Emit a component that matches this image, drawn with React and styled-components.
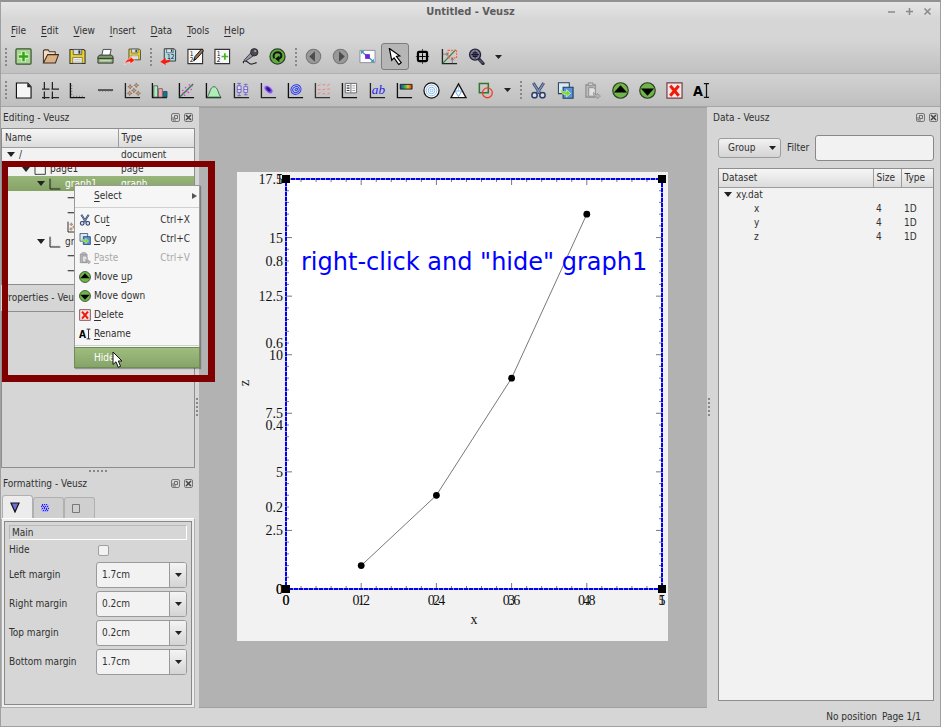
import { useState } from "react";
import styled, { createGlobalStyle, css } from "styled-components";

const GlobalStyle = createGlobalStyle`
  * {
    box-sizing: border-box;
  }
  body {
    margin: 0;
    background: #d6d6d6;
    color: #303030;
    font-family: "DejaVu Sans Condensed", "DejaVu Sans", sans-serif;
    font-size: 10px;
    line-height: 14px;
  }
  button, input {
    font: inherit;
    color: inherit;
    margin: 0;
  }
  button {
    padding: 0;
    border: 0;
    background: none;
  }
  svg {
    display: block;
    flex: none;
  }
`;

/* ---------- icons ---------- */

const Svg = ({ size = 17, children }) => (
  <svg width={size} height={size} viewBox="0 0 18 18" fill="none" aria-hidden="true">
    {children}
  </svg>
);

const Axes = ({ color = "#111" }) => (
  <path d="M1.5 1v15.5H17" stroke={color} strokeWidth="1.4" />
);

const Floppy = ({ fill }) => (
  <>
    <path d="M1 1.5h14.5l1.5 1.5v13.5H1z" fill={fill} stroke="#333" strokeWidth="1.1" />
    <path d="M4.500 1.500h9v5.500h-9z" fill="#d5dde0" stroke="#444" strokeWidth=".8" />
    <path d="M10 2.500h2v3.500h-2z" fill="#333" />
    <path d="M4 10h10v6H4z" fill="#f4f4ea" stroke="#555" strokeWidth=".7" />
    <path d="M5.500 12h7M5.500 14h7" stroke="#aaa" strokeWidth=".7" />
  </>
);

const Spark = ({ x, y }) => (
  <path
    d={`M${x} ${y - 2.5}l.7 1.800 1.800.7-1.800.7-.7 1.800-.7-1.800-1.800-.7 1.800-.7z`}
    fill="#d8a078"
    stroke="#6d4a35"
    strokeWidth=".5"
  />
);

const icons = {
  newDoc: (
    <>
      <rect x="1" y="1" width="16" height="16" rx="1" fill="#a9d494" stroke="#39552d" strokeWidth="1.300" />
      <path d="M9 3.500v11M3.500 9h11" stroke="#dff3d5" strokeWidth="4.600" />
      <path d="M9 4v10M4 9h10" stroke="#35a516" strokeWidth="2.600" />
    </>
  ),
  open: (
    <>
      <path d="M1.500 15.500V3l1-1h4l1.500 2h6v4" fill="#f3dcc2" stroke="#4a3a2b" strokeWidth="1.100" />
      <path d="M1.500 15.800L6 7h11.500l-3.300 8.800z" fill="#dcb184" stroke="#3c2d20" strokeWidth="1.100" />
    </>
  ),
  save: <Floppy fill="#ecd426" />,
  print: (
    <>
      <path d="M5 8l1.500-6.500h8.500L13.500 8z" fill="#fff" stroke="#444" />
      <path d="M1 9l2-1.500h12L17 9v2.500H1z" fill="#7c9d69" stroke="#333" />
      <path d="M1 11h16v5H1z" fill="#8fb27a" stroke="#333" />
      <path d="M3 13.500h12" stroke="#dcebd2" />
    </>
  ),
  exportDoc: (
    <>
      <g transform="translate(4.500 0) scale(.76)">
        <Floppy fill="#ecd426" />
      </g>
      <path d="M.5 18c1-4.500 3-6.500 6-6.500V9l5 4-5 4v-2.500c-3 0-4.500 1-6 3.500z" fill="#ff1a0d" stroke="#fff" strokeWidth=".5" />
    </>
  ),
  importData: (
    <>
      <path d="M4.500.8H15l1.500 1.500v11.500h-12z" fill="#a8dbe6" stroke="#333" />
      <path d="M7 1h7v4H7z" fill="#dbe7ea" stroke="#444" strokeWidth=".7" />
      <path d="M11.500 1.500h1.500v2.500h-1.500z" fill="#333" />
      <text x="7.500" y="11.500" fontSize="7" fill="#111">12</text>
      <path d="M11 11.500c0 3.500-2 4.500-5 4.300v2.200L.3 14.500 6 10.500v2.700c2 .2 3.500-.4 5-1.700z" fill="#ff1a0d" />
    </>
  ),
  editData: (
    <>
      <path d="M1 1.500h15.500v15H1z" fill="#f8f8f8" stroke="#333" strokeWidth="1.200" />
      <text x="3" y="8" fontSize="7" fill="#111">1</text>
      <text x="3" y="15" fontSize="7" fill="#111">2</text>
      <path d="M7 13.500L8.500 9l7-8 2 2-7 8z" fill="#9c7250" stroke="#111" />
      <path d="M7 13.500l.8-2.500 1.500 1.300z" fill="#111" />
    </>
  ),
  createData: (
    <>
      <path d="M1 1.500h15.500v15H1z" fill="#f8f8f8" stroke="#333" strokeWidth="1.200" />
      <text x="3" y="8" fontSize="7" fill="#111">1</text>
      <text x="3" y="15" fontSize="7" fill="#111">2</text>
      <path d="M11.500 5.500v7M8 9h7" stroke="#42b81d" strokeWidth="1.800" />
    </>
  ),
  capture: (
    <>
      <path d="M2 16c-1.500-1 0-3 2.500-2s3 3.500 6 3c2-.3 3-1 5-1.500" stroke="#222" strokeWidth="1.200" />
      <path d="M3.500 14l-1-1.500 7-7.500 3 3z" fill="#9a96ad" stroke="#3b394b" />
      <circle cx="13" cy="4.500" r="3.900" fill="#4c4c52" stroke="#1c1c1c" strokeWidth=".8" />
      <circle cx="14" cy="3.300" r="1.200" fill="#a5a5ad" />
    </>
  ),
  reload: (
    <>
      <circle cx="9" cy="9" r="8" fill="#5fae3e" stroke="#2f3f28" strokeWidth="1.300" />
      <path d="M5.500 11C3.500 7 6 4.500 9 4.500c5 0 5.500 6 1 7" stroke="#111" strokeWidth="2" />
      <path d="M11 8v7l-4.500-3.500z" fill="#111" />
    </>
  ),
  prev: (
    <>
      <circle cx="9" cy="9" r="7.700" fill="#999" stroke="#777" strokeWidth="1.100" />
      <path d="M10.500 3.500v11L4.500 9z" fill="#4c4c4c" />
    </>
  ),
  next: (
    <>
      <circle cx="9" cy="9" r="7.700" fill="#999" stroke="#777" strokeWidth="1.100" />
      <path d="M7.500 3.500v11l6-5.500z" fill="#4c4c4c" />
    </>
  ),
  fullscreen: (
    <>
      <path d="M1 2.500h16v13H1z" fill="#fdfdfd" stroke="#8b8b9e" />
      <path d="M2.500 3.500l13 11" stroke="#3f9ab5" strokeWidth="1.500" />
      <path d="M1.800 3h4L2.500 6.500zM16.200 15h-4l3.300-3.500z" fill="#3f9ab5" />
      <path d="M6.500 6.500h5v5h-5z" fill="#6b25dd" />
    </>
  ),
  select: (
    <path d="M2.500.5l2.500 12.500 2.500-2.500 5 7 2.500-2-5-6.500 3.500-.7z" fill="#fff" stroke="#000" strokeWidth="1.300" />
  ),
  readPoint: (
    <>
      <path d="M9 1v16M2 9h14" stroke="#333" strokeWidth=".9" />
      <rect x="4.200" y="4.200" width="9.600" height="9.600" rx="1" stroke="#000" strokeWidth="2.400" />
      <path d="M9 6v6M6 9h6" stroke="#000" strokeWidth="1" />
    </>
  ),
  zoomGraph: (
    <>
      <Axes color="#222" />
      <path d="M2 16L15.500 2" stroke="#268a42" strokeWidth="1.400" />
      <path d="M7.500 2.500h9v8h-9z" stroke="#ff6347" strokeWidth="1.200" strokeDasharray="2 1" />
      <path d="M2 6.500h5M12 11v5M5.500 5l2 1.500-2 1.500M10.500 12.800l1.500-2 1.500 2" stroke="#666" strokeWidth=".8" />
    </>
  ),
  zoomPage: (
    <>
      <path d="M11 11l5 5.500" stroke="#312f42" strokeWidth="3.400" strokeLinecap="round" />
      <path d="M12 12.500l3.500 3.500" stroke="#77758e" strokeWidth="1" />
      <circle cx="7.500" cy="7" r="5.800" fill="#8381a0" stroke="#25243a" strokeWidth="1.500" />
      <path d="M7.500 3v8M3.500 7h8M5.500 5h4v4h-4z" stroke="#191826" strokeWidth="1.100" />
    </>
  ),
  page: (
    <>
      <path d="M1.500 1h12L17 5v12H1.500z" fill="#f6f6f6" stroke="#111" strokeWidth="1.200" />
      <path d="M13 1l4 4.500h-4z" fill="#222" />
    </>
  ),
  grid: (
    <path d="M2.500 0v8M0 7.500h8M11 0v8M10 7.500h8M2.500 10v8M0 16.500h8M11 10v8M10 16.500h8" stroke="#222" strokeWidth="1.300" />
  ),
  graph: (
    <>
      <Axes />
      <path d="M2 4h1.500M2 7h1.500M2 10h1.500M2 13h1.500M5 16v-1.500M8 16v-1.500M11 16v-1.500M14 16v-1.500" stroke="#555" strokeWidth=".7" />
    </>
  ),
  axis: (
    <>
      <path d="M1 8.500h16" stroke="#111" strokeWidth="1.300" />
      <path d="M3 9v1.500M6 9v1.500M9 9v1.500M12 9v1.500M15 9v1.500" stroke="#777" strokeWidth=".7" />
    </>
  ),
  xy: (
    <>
      <Axes color="#222" />
      <Spark x={6.5} y={5} />
      <Spark x={13} y={3.5} />
      <Spark x={6} y={12} />
      <Spark x={10.5} y={9} />
      <Spark x={15} y={12} />
    </>
  ),
  bar: (
    <>
      <Axes />
      <path d="M3 4h4v12H3z" fill="#a9edb9" stroke="#334" strokeWidth=".7" />
      <path d="M8 7h4v9H8z" fill="#f6a5ad" stroke="#544" strokeWidth=".7" />
      <path d="M13 10h4v6h-4z" fill="#0c7794" stroke="#234" strokeWidth=".7" />
    </>
  ),
  fit: (
    <>
      <Axes />
      <path d="M2 16L16 2" stroke="#24843b" strokeWidth="1.500" />
      <path d="M5 9h.1M8 6h.1M12 3h.1M7 14h.1M11 11h.1M14 8h.1M15 4h.1M9 10h.1M5 12h.1" stroke="#e33ce3" strokeWidth="1.700" strokeLinecap="round" />
    </>
  ),
  func: (
    <>
      <Axes />
      <path d="M2 16C5 14 5 5 9.500 5S14 14 17 16z" fill="#b1edbb" stroke="#3c6b45" />
    </>
  ),
  box: (
    <>
      <Axes color="#222" />
      <path d="M6.500 1v14M13.500 2v12M4.500 1.500h4M4.500 14.500h4M11.500 2.500h4M11.500 13.500h4" stroke="#6c62c7" strokeWidth=".9" />
      <path d="M4.500 4h4v7h-4zM11.500 5h4v6h-4z" fill="#e3e0ff" stroke="#6c62c7" />
      <path d="M4.500 8h4M11.500 8h4" stroke="#6c62c7" />
    </>
  ),
  image: (
    <>
      <Axes color="#222" />
      <ellipse cx="9" cy="8" rx="6.800" ry="4" transform="rotate(42 9 8)" fill="#cdb6f0" />
      <ellipse cx="9" cy="8" rx="5" ry="2.800" transform="rotate(42 9 8)" fill="#8058d5" />
      <ellipse cx="8.800" cy="7.800" rx="3" ry="1.600" transform="rotate(42 9 8)" fill="#32109e" />
    </>
  ),
  contour: (
    <>
      <Axes />
      <g stroke="#2638f5" transform="rotate(-30 9.500 8)">
        <ellipse cx="9.500" cy="8" rx="5.500" ry="5" />
        <ellipse cx="9.500" cy="8" rx="3.500" ry="3" />
        <ellipse cx="9.800" cy="8" rx="1.500" ry="1" />
      </g>
    </>
  ),
  vector: (
    <>
      <Axes color="#333" />
      <path d="M4 4l3-1.500M9 3h3M14 4l3-2M4 8h3M9 8.500l3-1M14 7.500h3M4 13l3-2M9 12.500h3M14 13l3-1.500" stroke="#f08080" />
    </>
  ),
  key: (
    <>
      <Axes />
      <path d="M4.500 1.500h12v10h-12z" fill="#fff" stroke="#666" />
      <path d="M6 4h3M6 6.500h3M6 9h3" stroke="#234" strokeWidth="1.200" />
      <path d="M10.500 2v9" stroke="#666" />
      <path d="M12 4h3M12 6.500h3M12 9h3" stroke="#99a" />
    </>
  ),
  label: (
    <>
      <Axes color="#222" />
      <text x="3" y="13" fontSize="14" fontStyle="italic" fontFamily="Liberation Serif, serif" fill="#2323ee">ab</text>
    </>
  ),
  colorbar: (
    <>
      <defs>
        <linearGradient id="spectrum">
          <stop offset="0" stopColor="#2438c8" />
          <stop offset=".35" stopColor="#21b050" />
          <stop offset=".65" stopColor="#d8c722" />
          <stop offset="1" stopColor="#e02416" />
        </linearGradient>
      </defs>
      <Axes />
      <path d="M4.500 2.500h12.500v5H4.500z" fill="url(#spectrum)" stroke="#222" />
    </>
  ),
  polar: (
    <>
      <circle cx="9" cy="9" r="8" fill="#fff" stroke="#111" strokeWidth="1.300" />
      <circle cx="9" cy="9" r="5.700" stroke="#7eb6ee" />
      <circle cx="9" cy="9" r="3.500" stroke="#7eb6ee" />
      <circle cx="9" cy="9" r="1.400" stroke="#7eb6ee" />
    </>
  ),
  ternary: (
    <>
      <path d="M9 2l8 14.500H1z" fill="#fff" stroke="#111" strokeWidth="1.400" />
      <path d="M5.500 9.500h7L9 15.500z" stroke="#6aa4ef" />
      <path d="M9 4v5" stroke="#9ac3f5" />
    </>
  ),
  shape: (
    <>
      <path d="M2.500 1.500h9.500v10H2.500z" stroke="#31752f" strokeWidth="1.600" />
      <circle cx="11" cy="11.500" r="5.200" stroke="#f23c31" strokeWidth="1.400" />
    </>
  ),
  cut: (
    <>
      <path d="M3.500 1l7 11M14.500 1l-7 11" stroke="#2f4268" strokeWidth="3" />
      <path d="M3.700 1.500l6.500 10M14.300 1.500l-6.500 10" stroke="#7f93bd" strokeWidth="1.400" />
      <circle cx="4.800" cy="14" r="2.800" fill="#dde" stroke="#2c3f6b" strokeWidth="1.600" />
      <circle cx="13.200" cy="14" r="2.800" fill="#dde" stroke="#2c3f6b" strokeWidth="1.600" />
    </>
  ),
  copy: (
    <>
      <path d="M1.500.8H13v11.500H1.500z" fill="#dbe8f6" stroke="#27405f" strokeWidth="1.100" />
      <path d="M6.500 5.500H17v11.700H6.500z" fill="#5b93d8" stroke="#1f3d66" strokeWidth="1.200" />
      <path d="M3.500 6.500c1 3 3 4 6.500 4V8l4.500 4-4.500 4v-2.500c-4 0-6.500-2-6.500-7z" fill="#7cd832" stroke="#e9ffd9" strokeWidth=".6" />
    </>
  ),
  paste: (
    <g stroke="#8d8d8d">
      <path d="M2 3h10v13H2z" fill="#bcbcbc" strokeWidth="1.200" />
      <path d="M4.500 1h5v3h-5z" fill="#ccc" />
      <path d="M5 6h5l2 2v7H5z" fill="#e1e1e1" />
      <path d="M10 11c1 2 2 2.500 4 2.500V12l3.500 3-3.500 3v-2c-3 0-4.500-2-4-5z" fill="#b5b5b5" strokeWidth=".7" />
    </g>
  ),
  up: (
    <>
      <circle cx="9" cy="9" r="8.200" fill="#6fb548" stroke="#2c3d23" strokeWidth="1.200" />
      <path d="M9 3.500l7 7.500H2z" fill="#000" />
    </>
  ),
  down: (
    <>
      <circle cx="9" cy="9" r="8.200" fill="#6fb548" stroke="#2c3d23" strokeWidth="1.200" />
      <path d="M9 14.500L2 7h14z" fill="#000" />
    </>
  ),
  remove: (
    <>
      <path d="M1 1h16v16H1z" fill="#fbe4e6" stroke="#70424c" strokeWidth="1.300" />
      <path d="M4.500 4l9 10.500M13.500 4l-9 10.500" stroke="#ee1c06" strokeWidth="3.200" />
    </>
  ),
  rename: (
    <>
      <text x="0" y="15" fontSize="15" fontWeight="bold" fill="#000">A</text>
      <path d="M11.500 1.700h5.500M11.500 16.300h5.500M14.300 2v14" stroke="#111" strokeWidth="1.300" />
    </>
  ),
};

const Icon = ({ name, size }) => <Svg size={size}>{icons[name]}</Svg>;

const Caret = ({ wide }) => (
  <svg width={wide ? 8 : 7} height={wide ? 5 : 4} viewBox="0 0 8 5" preserveAspectRatio="none" aria-hidden="true">
    <path d="M0 0h8L4 5z" fill="#222" />
  </svg>
);

/* ---------- window ---------- */

const Window = styled.div`
  position: relative;
  display: flex;
  flex-direction: column;
  min-height: 100vh;
  border: 1px solid #a0a0a0;
  border-top: 2px solid #929292;
`;

const Header = styled.header`
  height: 72px;
  border-bottom: 1px solid #b0b0b0;
  background: linear-gradient(#e6e6e6, #d6d6d6 18px, #d6d6d6 36px, #c1c1c1);
`;

const TitleBar = styled.div`
  display: grid;
  grid-template-columns: 1fr auto 1fr;
  align-items: center;
  height: 19px;
  padding: 0 8px;
`;

const Title = styled.h1`
  grid-column: 2;
  margin: 0;
  color: #5c5c5c;
  font-size: 11px;
`;

const WindowButtons = styled.div`
  display: flex;
  justify-content: flex-end;
  gap: 9px;
`;

const WindowButton = styled.button`
  width: 9px;
  height: 9px;
`;

const MenuBar = styled.nav`
  display: flex;
  align-items: center;
  gap: 1px;
  height: 20px;
  padding-left: 3px;
`;

const MenuButton = styled.button`
  padding: 0 7px;
  line-height: 20px;
`;

const Key = styled.span`
  text-decoration: underline;
  text-underline-offset: 2px;
`;

const Toolbar = styled.div`
  display: flex;
  align-items: center;
  height: 31px;

  ${({ $second }) =>
    $second &&
    css`
      height: 33px;
      background: linear-gradient(#d2d2d2, #bfbfbf);
      border-bottom: 1px solid #a6a6a6;
    `}
`;

const ToolGroup = styled.div`
  display: flex;
  align-items: center;
`;

const Handle = styled.span`
  width: 8px;
  height: 20px;
  margin-right: 1px;
  border-left: 3px solid transparent;
  background: radial-gradient(circle, #888 1px, transparent 1px) 0 0 / 4px 4px repeat-y;
`;

const ToolButton = styled.button`
  display: flex;
  align-items: center;
  justify-content: center;
  width: 27px;
  height: 27px;
  border: 1px solid transparent;
  border-radius: 3px;

  &:nth-child(5n) {
    width: 28px;
  }

  ${({ $active }) =>
    $active &&
    css`
      background: #b6b6b6;
      border-color: #7d7d7d;
    `}
`;

const MoreButton = styled.button`
  display: flex;
  align-items: center;
  justify-content: center;
  width: 17px;
  height: 27px;
`;

const Body = styled.main`
  display: grid;
  flex: 1;
  grid-template-columns: 198px minmax(432px, 1fr) 233px;
`;

/* ---------- docks ---------- */

const Dock = styled.aside`
  display: flex;
  flex-direction: column;
  padding-right: 4px;
  position: relative;
`;

const DataDock = styled(Dock)`
  padding: 0 6px 7px 11px;
`;

const DockTitle = styled.div`
  display: flex;
  align-items: center;
  gap: 4px;
  height: ${({ $height = 21 }) => $height}px;
  padding: 0 2px;
`;

const DockName = styled.h2`
  flex: 1;
  margin: 0;
  font-size: 10px;
  font-weight: normal;
`;

const DockButton = styled.button`
  width: 9px;
  height: 9px;
  border: 1px solid #777;
  border-radius: 2px;
`;

const DataTitle = styled(DockTitle)`
  margin: 0 -6px 0 -7px;
`;

const Well = styled.div`
  overflow: hidden;
  border: 1px solid #8e8e8e;
  background: ${({ $plain }) => ($plain ? "#d6d6d6" : "#f2f2f2")};
  height: ${({ $height }) => ($height ? `${$height}px` : "auto")};
  flex: ${({ $grow }) => ($grow ? 1 : "none")};
`;

const Table = styled.table`
  width: 100%;
  border-collapse: collapse;
  table-layout: fixed;
`;

const Th = styled.th`
  width: ${({ $width }) => ($width ? `${$width}px` : "auto")};
  height: 18px;
  padding: 0 3px;
  border-bottom: 1px solid #9c9c9c;
  background: linear-gradient(#f6f6f6, #dcdcdc);
  font-weight: normal;
  text-align: left;

  & + & {
    border-left: 1px solid #9c9c9c;
  }
`;

const TreeRow = styled.tr`
  height: 15px;

  &:nth-child(even) {
    height: 14px;
  }

  ${({ $selected }) =>
    $selected &&
    css`
      background: linear-gradient(#98b57a, #86a367);
      color: #fff;
    `}
`;

const DataRow = styled.tr`
  height: 14px;
`;

const Td = styled.td`
  padding: 0 3px;
  line-height: 14px;
`;

const TreeCell = styled.div`
  display: flex;
  align-items: center;
  gap: 4px;
  height: 14px;
  padding-left: ${({ $level = 0 }) => $level * 15 + 2}px;
`;

const Splitter = styled.div`
  height: 5px;
  background: radial-gradient(circle, #888 1px, transparent 1px) center / 4px 4px repeat-x;
  width: 20px;
  margin: 0 auto;
`;

const SideGrip = styled.span`
  position: absolute;
  top: 290px;
  ${({ $side }) => $side}: 0;
  width: 4px;
  height: 21px;
  background: radial-gradient(circle, #888 1px, transparent 1px) 0 0 / 4px 4px repeat-y;
`;

const Tabs = styled.div`
  display: flex;
  align-items: flex-end;
  height: 24px;
  padding-left: 1px;
`;

const Tab = styled.button`
  display: flex;
  align-items: center;
  width: 31px;
  height: ${({ $active }) => ($active ? 24 : 21)}px;
  padding: 0 7px;
  border: 1px solid #b0b0b0;
  border-bottom: 0;
  border-radius: 3px 3px 0 0;
  background: ${({ $active }) => ($active ? "#ececec" : "#cfcfcf")};
  margin-bottom: ${({ $active }) => ($active ? -1 : 0)}px;
`;

const FormFrame = styled.div`
  border: 1px solid #b0b0b0;
  border-top-color: #fff;
  background: #eee;
  padding: 2px;
`;

const Form = styled.form`
  padding: 3px 4px 28px;
  border: 1px solid #888;
  background: #d6d6d6;
`;

const FormHeading = styled.div`
  height: 15px;
  padding-left: 2px;
  border: 1px solid #fff;
  border-top-color: #b8b8b8;
  border-left-color: #b8b8b8;
`;

const Field = styled.div`
  display: flex;
  align-items: center;
  height: ${({ $height = 29 }) => $height}px;
`;

const FieldLabel = styled.label`
  width: 87px;
`;

const CheckBox = styled.input`
  appearance: none;
  width: 11px;
  height: 11px;
  margin-left: 2px;
  border: 1px solid #a0a0a0;
  border-radius: 2px;
  background: #f2f2f2;
`;

const Combo = styled.div`
  display: flex;
  flex: 1;
  height: 26px;
  border: 1px solid #9a9a9a;
  border-radius: 3px;
  background: #f2f2f2;
`;

const ComboInput = styled.input`
  flex: 1;
  width: 0;
  padding: 0 5px;
  border: 0;
  background: none;
`;

const ComboButton = styled.button`
  display: flex;
  align-items: center;
  justify-content: center;
  width: 17px;
  border-left: 1px solid #9a9a9a;
  border-radius: 0 2px 2px 0;
  background: linear-gradient(#f4f4f4, #d4d4d4);
`;

const FilterBar = styled.div`
  display: flex;
  align-items: center;
  gap: 6px;
  height: 40px;
`;

const GroupButton = styled.button`
  display: flex;
  align-items: center;
  justify-content: space-between;
  width: 63px;
  height: 20px;
  padding: 0 4px 0 9px;
  border: 1px solid #9c9c9c;
  border-radius: 3px;
  background: linear-gradient(#f2f2f2, #d4d4d4);
`;

const FilterInput = styled.input`
  flex: 1;
  width: 0;
  height: 26px;
  padding: 0 5px;
  border: 1px solid #888;
  border-radius: 3px;
  background: #f2f2f2;
`;

/* ---------- plot ---------- */

const Canvas = styled.section`
  display: flex;
  align-items: center;
  justify-content: center;
  padding: 0 2px 2px 0;
  border: solid #a0a0a0;
  border-width: 1px 0;
  background: #b2b2b2;
`;

const StatusBar = styled.footer`
  display: flex;
  align-items: center;
  justify-content: flex-end;
  gap: 5px;
  height: 18px;
  padding-right: 19px;
`;

/* ---------- overlays ---------- */

const RedFrame = styled.div`
  position: absolute;
  top: 159px;
  left: 1px;
  width: 213px;
  height: 221px;
  border: 6px solid #800000;
  border-bottom-width: 7px;
  border-right-width: 7px;
  pointer-events: none;
`;

const Popup = styled.div`
  position: absolute;
  top: 183px;
  left: 73px;
  width: 126px;
  border: 1px solid #999;
  background: #f6f6f6;
  box-shadow: 1px 1px 1px rgba(0, 0, 0, 0.3);
`;

const PopupItem = styled.button`
  display: grid;
  grid-template-columns: 15px 1fr auto;
  align-items: center;
  width: 100%;
  height: 19px;
  padding: 0 2px 0 4px;
  text-align: left;

  &:disabled {
    color: #a8a8a8;
  }

  ${({ $selected }) =>
    $selected &&
    css`
      background: linear-gradient(#a0bd80, #87a468);
      box-shadow: 0 0 0 1px #708b58;
      color: #fff;
    `}
`;

const ItemText = styled.span`
  grid-column: 2;
`;

const Shortcut = styled.span`
  padding-right: 7px;
`;

const Separator = styled.hr`
  height: 1px;
  margin: 2px 0;
  border: 0;
  background: #d0d0d0;
`;

const Pointer = styled.svg`
  position: absolute;
  left: 37px;
  bottom: -2px;
`;

const menus = ["File", "Edit", "View", "Insert", "Data", "Tools", "Help"];

const mainTools = [
  ["newDoc", "open", "save", "print", "exportDoc"],
  ["importData", "editData", "createData", "capture", "reload"],
  ["prev", "next", "fullscreen", "select", "readPoint", "zoomGraph", "zoomPage"],
];

const widgetTools = [
  ["page", "grid", "graph", "axis", "xy", "bar", "fit", "func", "box", "image", "contour", "vector", "key", "label", "colorbar", "polar", "ternary", "shape"],
  ["cut", "copy", "paste", "up", "down", "remove", "rename"],
];

const tree = [
  { level: 0, name: "/", type: "document", open: true },
  { level: 1, name: "page1", type: "page", icon: "page", open: true },
  { level: 2, name: "graph1", type: "graph", icon: "graph", open: true, selected: true },
  { level: 4, name: "x", type: "axis", icon: "axis" },
  { level: 4, name: "y", type: "axis", icon: "axis" },
  { level: 4, name: "xy1", type: "xy", icon: "xy" },
  { level: 2, name: "graph2", type: "graph", icon: "graph", open: true },
  { level: 4, name: "x", type: "axis", icon: "axis" },
  { level: 4, name: "y", type: "axis", icon: "axis" },
];

const popupItems = [
  { before: "", key: "S", after: "elect", submenu: true },
  null,
  { before: "Cu", key: "t", after: "", hint: "Ctrl+X", icon: "cut" },
  { before: "", key: "C", after: "opy", hint: "Ctrl+C", icon: "copy" },
  { before: "", key: "P", after: "aste", hint: "Ctrl+V", icon: "paste", disabled: true },
  { before: "Move ", key: "u", after: "p", icon: "up" },
  { before: "Move d", key: "o", after: "wn", icon: "down" },
  { before: "", key: "D", after: "elete", icon: "remove" },
  { before: "", key: "R", after: "ename", icon: "rename" },
  null,
  { before: "Hide", key: "", after: "", selected: true },
];

const margins = [
  ["Left margin", "1.7cm"],
  ["Right margin", "0.2cm"],
  ["Top margin", "0.2cm"],
  ["Bottom margin", "1.7cm"],
];

const Tools = ({ groups, moreAfter }) =>
  groups.map((group, i) => (
    <ToolGroup key={i}>
      <Handle />
      {group.map((name) => (
        <ToolButton key={name} type="button" aria-label={name} $active={name === "select"}>
          <Icon name={name} />
        </ToolButton>
      ))}
      {moreAfter === i && (
        <MoreButton type="button" aria-label="more">
          <Caret />
        </MoreButton>
      )}
    </ToolGroup>
  ));

const DockButtons = () => (
  <>
    <DockButton type="button" aria-label="float">
      <svg width="7" height="7" viewBox="0 0 7 7" fill="none" stroke="#555">
        <path d="M2.500 1.500h3v3h-3zM1 3v3h3" strokeWidth=".8" />
      </svg>
    </DockButton>
    <DockButton type="button" aria-label="close">
      <svg width="7" height="7" viewBox="0 0 7 7" fill="none" stroke="#444">
        <path d="M1 1l5 5M6 1L1 6" strokeWidth="1.500" />
      </svg>
    </DockButton>
  </>
);

const LEFT = 49;
const RIGHT = 425;
const TOP = 7;
const BOTTOM = 417;
const toX = (v) => LEFT + ((RIGHT - LEFT) * v) / 5;
const toY = (v) => BOTTOM - ((BOTTOM - TOP) * v) / 17.5;
const points = [[1, 1], [2, 4], [3, 9], [4, 16]];

function Plot() {
  const xTicks = Array.from({ length: 24 }, (_, i) => i + 1);
  const yTicks = Array.from({ length: 34 }, (_, i) => i + 1);

  return (
    <svg width="431" height="469" viewBox="0 0 431 469" fontFamily="Liberation Serif, serif" fontSize="14">
      <rect width="431" height="469" fill="#f2f2f2" />
      <rect x={LEFT} y={TOP} width={RIGHT - LEFT} height={BOTTOM - TOP} fill="#fff" stroke="#444" />
      <g stroke="#555" strokeWidth=".8">
        {xTicks.map((i) => {
          const len = i % 5 ? 3 : 6;
          return <path key={i} d={`M${toX(i / 5)} ${BOTTOM}v${-len}M${toX(i / 5)} ${TOP}v${len}`} />;
        })}
        {yTicks.map((i) => {
          const len = i % 5 ? 3 : 6;
          return <path key={i} d={`M${LEFT} ${toY(i / 2)}h${len}M${RIGHT} ${toY(i / 2)}h${-len}`} />;
        })}
      </g>
      <polyline points={points.map(([x, y]) => `${toX(x)},${toY(y)}`).join(" ")} fill="none" stroke="#555" strokeWidth=".8" />
      {points.map(([x, y]) => (
        <circle key={x} cx={toX(x)} cy={toY(y)} r="3.400" />
      ))}
      <g textAnchor="end" fill="#111">
        {[0, 2.5, 5, 7.5, 10, 12.5, 15, 17.5].map((v) => (
          <text key={v} x="46" y={toY(v) + 5}>{v}</text>
        ))}
        {[0, 0.2, 0.4, 0.6, 0.8, 1].map((v) => (
          <text key={v} x="46" y={toY(v * 17.5) + 5}>{v}</text>
        ))}
      </g>
      <g textAnchor="middle" fill="#111">
        {[0, 1, 2, 3, 4, 5].map((v) => (
          <g key={v}>
            <text x={toX(v)} y="433">{v}</text>
            <text x={toX(v)} y="433">{v / 5}</text>
          </g>
        ))}
        <text x="237" y="452">x</text>
        <text transform="translate(12 211) rotate(-90)">z</text>
      </g>
      <rect x={LEFT} y={TOP} width={RIGHT - LEFT} height={BOTTOM - TOP} fill="none" stroke="#00f" strokeWidth="2" strokeDasharray="4 1" />
      {[[LEFT, TOP], [RIGHT, TOP], [LEFT, BOTTOM], [RIGHT, BOTTOM]].map(([x, y]) => (
        <rect key={`${x}-${y}`} x={x - 4} y={y - 4} width="8" height="8" />
      ))}
      <text x="64" y="98" fontFamily="DejaVu Sans, sans-serif" fontSize="24" fill="#00f">
        right-click and "hide" graph1
      </text>
    </svg>
  );
}

function EditingDock() {
  const [values, setValues] = useState(margins.map(([, value]) => value));

  return (
    <Dock>
      <DockTitle>
        <DockName>Editing - Veusz</DockName>
        <DockButtons />
      </DockTitle>
      <Well $height={157}>
        <Table>
          <thead>
            <tr>
              <Th>Name</Th>
              <Th $width={76}>Type</Th>
            </tr>
          </thead>
          <tbody>
            {tree.map((row, i) => (
              <TreeRow key={i} $selected={row.selected}>
                <Td>
                  <TreeCell $level={row.level}>
                    {row.open && <Caret wide />}
                    {row.icon && <Icon name={row.icon} size={12} />}
                    <span>{row.name}</span>
                  </TreeCell>
                </Td>
                <Td>{row.type}</Td>
              </TreeRow>
            ))}
          </tbody>
        </Table>
      </Well>
      <DockTitle $height={26}>
        <DockName>Properties - Veusz</DockName>
        <DockButtons />
      </DockTitle>
      <Well $plain $grow />
      <Splitter />
      <DockTitle>
        <DockName>Formatting - Veusz</DockName>
        <DockButtons />
      </DockTitle>
      <Tabs>
        <Tab type="button" aria-label="Main" $active>
          <svg width="10" height="11" viewBox="0 0 10 11">
            <path d="M1 1h8L5 10z" fill="#6d6de0" stroke="#111" strokeWidth="1.200" />
          </svg>
        </Tab>
        <Tab type="button" aria-label="Background">
          <svg width="8" height="8" viewBox="0 0 8 8">
            <path d="M1 0h6v1h1v6H7v1H1V7H0V1h1z" fill="#a9a9f5" />
            <path
              d="M1 .5h1M3 .5h1M5 .5h1M0 2.500h1M2 2.500h1M4 2.500h1M6 2.500h1M1 4.500h1M3 4.500h1M5 4.500h1M7 4.500h1M2 6.500h1M4 6.500h1M6 6.500h1M1 1.500h1M3 3.500h1M5 5.500h1"
              stroke="#2222ee"
            />
          </svg>
        </Tab>
        <Tab type="button" aria-label="Border">
          <svg width="8" height="9" viewBox="0 0 8 9">
            <path d="M.5.5h7v8h-7z" fill="none" stroke="#777" />
          </svg>
        </Tab>
      </Tabs>
      <FormFrame>
        <Form>
          <FormHeading>Main</FormHeading>
          <Field $height={20}>
            <FieldLabel htmlFor="hide">Hide</FieldLabel>
            <CheckBox id="hide" type="checkbox" />
          </Field>
          {margins.map(([label], i) => (
            <Field key={label}>
              <FieldLabel htmlFor={`margin-${i}`}>{label}</FieldLabel>
              <Combo>
                <ComboInput
                  id={`margin-${i}`}
                  value={values[i]}
                  onChange={(e) => setValues(values.map((v, n) => (n === i ? e.target.value : v)))}
                />
                <ComboButton type="button" aria-label={`${label} options`}>
                  <Caret />
                </ComboButton>
              </Combo>
            </Field>
          ))}
        </Form>
      </FormFrame>
      <SideGrip $side="right" />
    </Dock>
  );
}

function Datasets() {
  return (
    <DataDock>
      <SideGrip $side="left" />
      <DataTitle>
        <DockName>Data - Veusz</DockName>
        <DockButtons />
      </DataTitle>
      <FilterBar>
        <GroupButton type="button">
          Group <Caret />
        </GroupButton>
        <label htmlFor="filter">Filter</label>
        <FilterInput id="filter" />
      </FilterBar>
      <Well $grow>
        <Table>
          <thead>
            <tr>
              <Th>Dataset</Th>
              <Th $width={28}>Size</Th>
              <Th $width={32}>Type</Th>
            </tr>
          </thead>
          <tbody>
            <DataRow>
              <Td colSpan={3}>
                <TreeCell>
                  <Caret wide />
                  <span>xy.dat</span>
                </TreeCell>
              </Td>
            </DataRow>
            {["x", "y", "z"].map((name) => (
              <DataRow key={name}>
                <Td>
                  <TreeCell $level={2}>{name}</TreeCell>
                </Td>
                <Td>4</Td>
                <Td>1D</Td>
              </DataRow>
            ))}
          </tbody>
        </Table>
      </Well>
    </DataDock>
  );
}

function ContextMenu() {
  return (
    <Popup>
      {popupItems.map((item, i) =>
        item ? (
          <PopupItem key={i} type="button" disabled={item.disabled} $selected={item.selected}>
            {item.icon && <Icon name={item.icon} size={12} />}
            <ItemText>
              {item.before}
              {item.key && <Key>{item.key}</Key>}
              {item.after}
            </ItemText>
            {item.hint && <Shortcut>{item.hint}</Shortcut>}
            {item.submenu && (
              <svg width="5" height="6" viewBox="0 0 5 6" aria-hidden="true">
                <path d="M0 0l5 3-5 3z" fill="#555" />
              </svg>
            )}
          </PopupItem>
        ) : (
          <Separator key={i} />
        )
      )}
      <Pointer width="11" height="18" viewBox="0 0 11 18">
        <path d="M1 1v12.500l3-2.700 2.200 5.500 2.400-1-2.300-5.300H10z" fill="#fff" stroke="#111" />
      </Pointer>
    </Popup>
  );
}

function App() {
  return (
    <Window>
      <GlobalStyle />
      <Header>
        <TitleBar>
          <Title>Untitled - Veusz</Title>
          <WindowButtons>
            {["M1 5h7", "M1 4.500h7M4.500 1v7", "M1.500 1.500l6 6M7.500 1.500l-6 6"].map((d) => (
              <WindowButton key={d} type="button" aria-label="window control">
                <svg width="9" height="9" viewBox="0 0 9 9">
                  <path d={d} stroke="#888" strokeWidth="1.500" />
                </svg>
              </WindowButton>
            ))}
          </WindowButtons>
        </TitleBar>
        <MenuBar>
          {menus.map((menu) => (
            <MenuButton key={menu} type="button">
              <Key>{menu[0]}</Key>
              {menu.slice(1)}
            </MenuButton>
          ))}
        </MenuBar>
        <Toolbar>
          <Tools groups={mainTools} moreAfter={2} />
        </Toolbar>
      </Header>
      <Toolbar $second>
        <Tools groups={widgetTools} moreAfter={0} />
      </Toolbar>
      <Body>
        <EditingDock />
        <Canvas>
          <Plot />
        </Canvas>
        <Datasets />
      </Body>
      <StatusBar>
        <span>No position</span>
        <span>Page 1/1</span>
      </StatusBar>
      <RedFrame />
      <ContextMenu />
    </Window>
  );
}

export default App;
